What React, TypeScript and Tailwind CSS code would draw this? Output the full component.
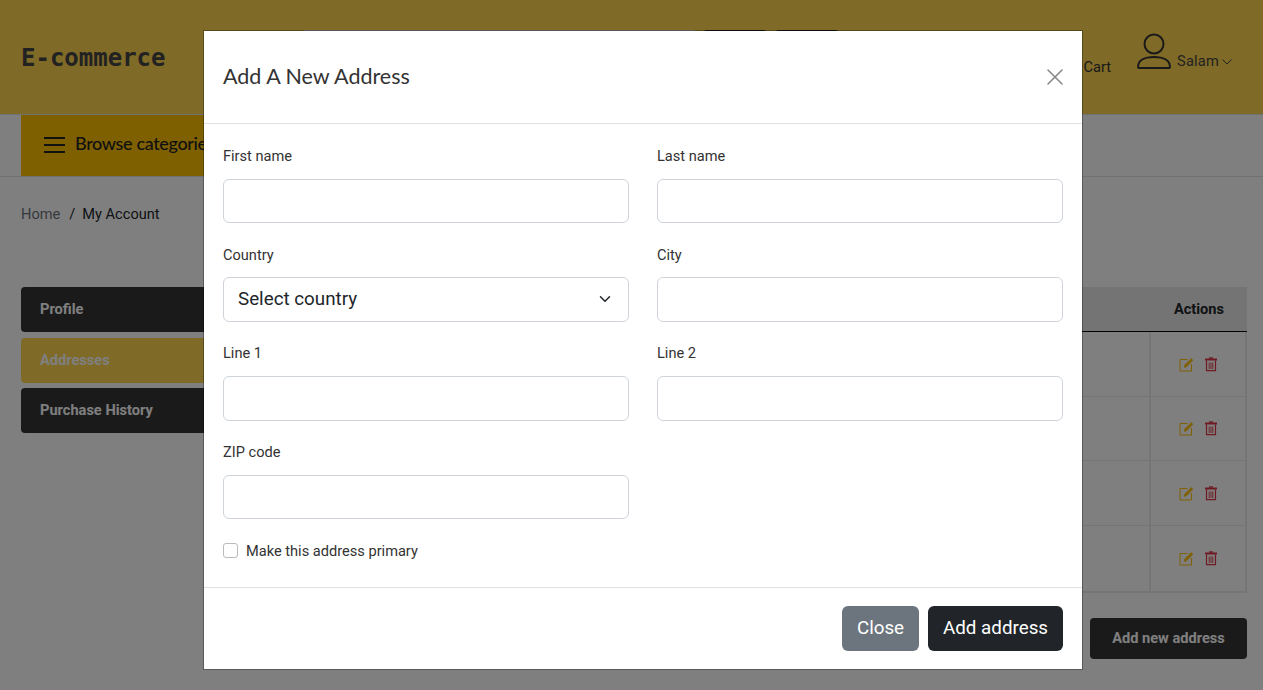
import { useState } from 'react'
import { ChevronDown, X } from 'lucide-react'

const rows = [65, 64, 65, 65]

function Field({ label, lineClass = 'leading-[21px]', children }: { label: string; lineClass?: string; children?: React.ReactNode }) {
  return (
    <div>
      <label className={`block h-[21px] mb-3 text-[14.6px] text-[#333] ${lineClass}`}>{label}</label>
      {children ?? (
        <input className="block w-full h-[44.3px] rounded-md border border-[#ced4da] bg-white px-3" />
      )}
    </div>
  )
}

function EditIcon() {
  return (
    <svg viewBox="0 0 15 15" className="h-[15px] w-[15px] text-[#ffc107]" fill="none" stroke="currentColor">
      <path d="M8.5 2.5H1v11.5h11.5V7" strokeWidth="1" />
      <path d="M5 10.5l.6-2.4L12.2 1.5l1.8 1.8-6.6 6.6z" fill="currentColor" strokeWidth="0.5" />
    </svg>
  )
}

function TrashIcon() {
  return (
    <svg viewBox="0 0 14 15" className="h-[15px] w-[14px] text-[#dc3545]" fill="none" stroke="currentColor">
      <path d="M1 2.5h12" strokeWidth="2" />
      <path d="M5 1h4" strokeWidth="1.4" />
      <path d="M2.5 3.5v10.2h9V3.5" strokeWidth="1.2" />
      <path d="M5.2 5.5v6.5M7 5.5v6.5M8.8 5.5v6.5" strokeWidth="0.9" />
    </svg>
  )
}

export default function App() {
  const [primary, setPrimary] = useState(false)

  return (
    <div className="relative h-[690px] overflow-hidden bg-white font-['Roboto',sans-serif] text-[#212529]">
      {/* ── Header ── */}
      <header className="flex h-[114px] items-start bg-[#ffd54f] pl-[21px] pr-[31px]">
        <div className="mt-[43px] w-[283px] font-['DejaVu_Sans_Mono',monospace] text-2xl font-bold leading-[30px] text-[#444]">
          E-commerce
        </div>
        <div className="mt-[30px] h-[44px] w-[391px] bg-white" />
        <div className="ml-2 mt-[30px] h-[44px] w-16 rounded bg-[#212529]" />
        <div className="ml-2 mt-[30px] h-[44px] w-16 rounded bg-[#212529]" />
        <div className="ml-auto mt-[57px] text-[14.6px] leading-[21px] text-[#333]">Cart</div>
        <div className="ml-[26px] mt-[33px] flex items-start">
          <svg viewBox="0 0 34 36" className="h-9 w-[34px] text-[#333]" fill="none" stroke="currentColor" strokeWidth="2">
            <circle cx="17" cy="11" r="9.5" />
            <path d="M1 34c0-7 7-10 16-10s16 3 16 10c0 .6-.4 1-1 1H2c-.6 0-1-.4-1-1z" />
          </svg>
          <span className="ml-[6px] mt-[18px] text-[14.6px] leading-[21px] tracking-[0.2px] text-[#444]">Salam</span>
          <svg viewBox="0 0 10 6" className="ml-[3px] mt-[26px] h-[6px] w-[10px] text-[#444]" fill="none" stroke="currentColor" strokeWidth="1">
            <path d="M.5.5L5 5 9.5.5" />
          </svg>
        </div>
      </header>

      {/* ── Nav ── */}
      <nav className="h-[63px] border-y border-[#dee2e6] pl-[21px]">
        <div className="flex h-full w-[300px] items-center bg-[#ffc000] pl-[23px] font-['Lato',sans-serif] text-lg font-medium tracking-[-0.35px] text-[#222]">
          <svg viewBox="0 0 21 16" className="mt-[-2px] h-4 w-[21px]" fill="none" stroke="currentColor" strokeWidth="2">
            <path d="M0 1h21M0 8h21M0 15h21" />
          </svg>
          <span className="mb-[5px] ml-[10px]">Browse categories</span>
        </div>
      </nav>

      <div className="mt-[27px] flex gap-[9px] pl-[21px] text-[14.6px] leading-[21px]">
        <span className="text-[#6c757d]">Home</span>
        <span className="mr-[-2px]">/</span>
        <span>My Account</span>
      </div>

      {/* ── Account ── */}
      <main className="mt-[62px] flex gap-[30px] px-4 pl-[21px]">
        <aside className="flex w-[300px] shrink-0 flex-col text-[14.6px] font-bold text-white">
          <div className="mb-[6px] flex h-[45px] items-center rounded bg-[#343434] px-[19px]">Profile</div>
          <div className="mb-[5px] flex h-[45px] items-center rounded bg-[#ffd54f] px-[19px]">Addresses</div>
          <div className="flex h-[45px] items-center rounded bg-[#343434] px-[19px]">Purchase History</div>
        </aside>
        <section className="flex-1">
          <div className="flex h-[45px] items-center justify-end border-b border-black bg-[#e9e9e9] pr-[23px] pt-[1px] text-[14.6px] font-bold">
            Actions
          </div>
          <div className="border-b-2 border-r-2 border-[#ebebeb]">
            {rows.map((h, i) => (
              <div key={i} className="flex border-b border-[#ebebeb] last:border-b-0" style={{ height: h }}>
                <div className="flex-1" />
                <div className="flex w-[96px] items-center justify-center gap-[10px] border-l-2 border-[#ebebeb]">
                  <EditIcon />
                  <TrashIcon />
                </div>
              </div>
            ))}
          </div>
          <div className="mt-[25px] flex justify-end">
            <button className="h-[41px] w-[157px] rounded bg-[#343434] text-[14.6px] font-bold text-white">
              Add new address
            </button>
          </div>
        </section>
      </main>

      {/* ── Modal ── */}
      <div className="fixed inset-0 bg-black/50" />
      <div className="fixed left-[203px] top-[30px] w-[880px] border border-black/30 bg-white bg-clip-padding">
        <div className="flex h-[93px] items-center justify-between border-b border-[#dee2e6] pl-[19px] pr-[13px]">
          <h2 className="pb-[2px] font-['Lato',sans-serif] text-[21.5px] font-normal text-[#333]">Add A New Address</h2>
          <X className="h-[28px] w-[28px] text-[#888]" strokeWidth={1.3} />
        </div>

        <div className="grid grid-cols-2 gap-x-7 gap-y-[21px] px-[19px] pt-[22px]">
          <Field label="First name" />
          <Field label="Last name" />
          <Field label="Country" lineClass="leading-[23px]">
            <div className="flex h-[45px] items-center justify-between rounded-md border border-[#ced4da] px-[14px] pb-[1px] text-[18.8px] text-[#212529]">
              Select country
              <ChevronDown className="h-[18px] w-[18px]" strokeWidth={2} />
            </div>
          </Field>
          <Field label="City" lineClass="leading-[23px]" />
          <Field label="Line 1" />
          <Field label="Line 2" />
          <Field label="ZIP code" />
        </div>

        <label className="mx-[19px] mt-[24px] flex items-center gap-2 text-[14.6px] leading-[16px] text-[#333]">
          <input
            type="checkbox"
            checked={primary}
            onChange={(e) => setPrimary(e.target.checked)}
            className="h-[15px] w-[15px] appearance-none rounded-[3px] border border-[#bbb] bg-white"
          />
          Make this address primary
        </label>

        <div className="mt-[28px] flex h-[82px] items-center justify-end gap-[9px] border-t border-[#dee2e6] pr-[19px]">
          <button className="h-[45px] w-[77px] rounded-md bg-[#6c757d] text-[18.8px] text-white">Close</button>
          <button className="h-[45px] w-[135px] rounded-md bg-[#212529] text-[18.8px] text-white">Add address</button>
        </div>
      </div>
    </div>
  )
}
